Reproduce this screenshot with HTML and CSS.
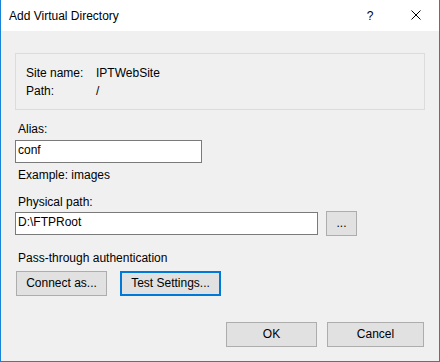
FILE: index.html
```html
<!DOCTYPE html>
<html>
<head>
<meta charset="utf-8">
<link rel="stylesheet" href="styles.css">
</head>
<body>
<div class="window">
  <div class="titlebar">
    <span class="title">Add Virtual Directory</span>
    <div class="controls">
      <span class="ctl help">?</span>
      <span class="ctl close">
        <svg width="10" height="10" viewBox="0 0 10 10"><path d="M0.5 0.5 L9.5 9.5 M9.5 0.5 L0.5 9.5" stroke="#000" stroke-width="1" fill="none"/></svg>
      </span>
    </div>
  </div>
  <div class="content">
    <div class="info">
      <span>Site name:</span><span>IPTWebSite</span>
      <span>Path:</span><span>/</span>
    </div>
    <div class="label first">Alias:</div>
    <div class="input alias">conf</div>
    <div class="label hint">Example: images</div>
    <div class="label section">Physical path:</div>
    <div class="path-row">
      <div class="input path">D:\FTPRoot</div>
      <button class="btn browse">...</button>
    </div>
    <div class="label auth">Pass-through authentication</div>
    <div class="btn-row">
      <button class="btn connect">Connect as...</button>
      <button class="btn test focused">Test Settings...</button>
    </div>
    <div class="footer">
      <button class="btn ok">OK</button>
      <button class="btn cancel">Cancel</button>
    </div>
  </div>
</div>
</body>
</html>
```

FILE: styles.css
```css
html, body {
  margin: 0;
  padding: 0;
  background: #ffffff;
}
.window {
  box-sizing: border-box;
  width: 440px;
  height: 362px;
  border: 1px solid #1883d7;
  border-top: none;
  background: #f0f0f0;
  font-family: "Liberation Sans", Arial, sans-serif;
  font-size: 12px;
  color: #000;
  display: flex;
  flex-direction: column;
}
.titlebar {
  height: 31px;
  background: #ffffff;
  display: flex;
  align-items: center;
  justify-content: space-between;
  flex: none;
}
.title {
  padding-left: 8px;
  line-height: 31px;
  padding-top: 1px;
}
.controls {
  display: flex;
  height: 30px;
  align-self: flex-start;
}
.ctl {
  width: 46px;
  height: 30px;
  display: flex;
  align-items: center;
  justify-content: center;
}
.help {
  padding-top: 1px;
  box-sizing: border-box;
}
.close svg {
  display: block;
}
.content {
  padding: 22px 14px 0 14px;
  display: flex;
  flex-direction: column;
  align-items: flex-start;
}
.info {
  box-sizing: border-box;
  width: 410px;
  border: 1px solid #dcdcdc;
  padding: 10px 10px 9px 10px;
  display: grid;
  grid-template-columns: 70px auto;
  line-height: 18px;
}
.label {
  line-height: 16px;
  margin-left: 3px;
}
.label.first { margin-top: 11px; }
.label.hint { margin-top: 4px; }
.label.section { margin-top: 11px; }
.label.auth { margin-top: 14px; }
.input {
  box-sizing: border-box;
  height: 23px;
  background: #ffffff;
  border: 1px solid #7a7a7a;
  line-height: 18px;
  padding: 0 2px;
}
.alias {
  width: 187px;
  margin-top: 3px;
}
.path-row {
  margin-top: 1px;
  display: flex;
  align-items: center;
  gap: 8px;
}
.path {
  width: 303px;
}
.btn {
  box-sizing: border-box;
  height: 25px;
  margin: 0;
  padding: 0;
  background: #e1e1e1;
  border: 1px solid #adadad;
  font-family: "Liberation Sans", Arial, sans-serif;
  font-size: 12px;
  color: #000;
  line-height: 23px;
  text-align: center;
}
.browse { width: 31px; }
.btn-row {
  margin-top: 5px;
  display: flex;
  gap: 13px;
  margin-left: 1px;
}
.connect { width: 91px; }
.test { width: 101px; }
.focused {
  border: 2px solid #0078d7;
  line-height: 21px;
}
.footer {
  margin-top: 26px;
  align-self: stretch;
  display: flex;
  justify-content: flex-end;
  gap: 10px;
  padding-right: 1px;
}
.ok { width: 91px; }
.cancel { width: 97px; }
```
